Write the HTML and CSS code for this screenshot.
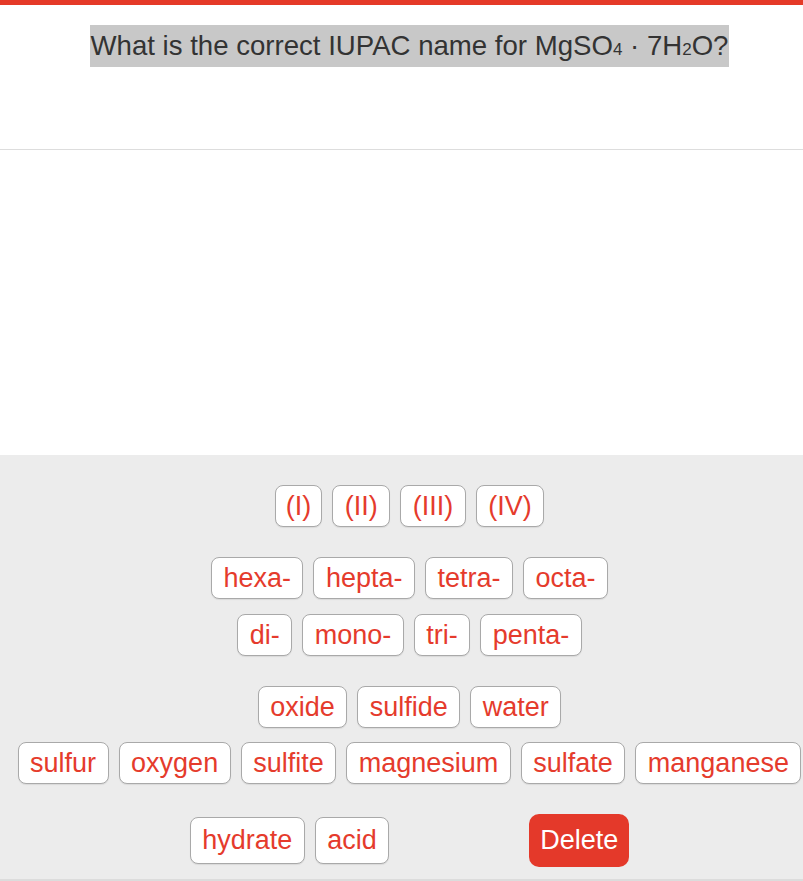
FILE: index.html
```html
<!DOCTYPE html>
<html lang="en">
<head>
<meta charset="utf-8">
<title>IUPAC name</title>
<link rel="stylesheet" href="styles.css">
</head>
<body>
<div class="topbar"></div>
<header class="question-area">
  <span class="question">What is the correct IUPAC name for MgSO<span class="sub">4</span> · 7H<span class="sub">2</span>O?</span>
</header>
<main class="answer-area"></main>
<section class="bank">
  <div class="group">
    <div class="row">
      <button class="tile tile-narrow">(I)</button>
      <button class="tile">(II)</button>
      <button class="tile">(III)</button>
      <button class="tile">(IV)</button>
    </div>
  </div>
  <div class="group">
    <div class="row">
      <button class="tile">hexa-</button>
      <button class="tile">hepta-</button>
      <button class="tile">tetra-</button>
      <button class="tile">octa-</button>
    </div>
    <div class="row">
      <button class="tile">di-</button>
      <button class="tile">mono-</button>
      <button class="tile">tri-</button>
      <button class="tile">penta-</button>
    </div>
  </div>
  <div class="group">
    <div class="row">
      <button class="tile">oxide</button>
      <button class="tile">sulfide</button>
      <button class="tile">water</button>
    </div>
    <div class="row row-tight">
      <button class="tile">sulfur</button>
      <button class="tile">oxygen</button>
      <button class="tile">sulfite</button>
      <button class="tile">magnesium</button>
      <button class="tile">sulfate</button>
      <button class="tile">manganese</button>
    </div>
  </div>
  <div class="group last">
    <div class="row actions">
      <div class="subrow">
        <button class="tile tall">hydrate</button>
        <button class="tile tall">acid</button>
      </div>
      <button class="delete">Delete</button>
    </div>
  </div>
</section>
</body>
</html>
```
FILE: styles.css
```css
html, body {
  margin: 0;
  padding: 0;
  background: #ffffff;
}

body {
  font-family: "Liberation Sans", Arial, sans-serif;
  width: 803px;
  height: 881px;
  overflow: hidden;
}

.topbar {
  height: 5px;
  background: #e53a28;
}

.question-area {
  box-sizing: border-box;
  height: 145px;
  padding: 20px 0 0 16px;
  text-align: center;
  border-bottom: 1px solid #dddddd;
}

.question {
  display: inline-block;
  vertical-align: top;
  height: 42px;
  background: #c8c8c8;
  color: #333333;
  font-size: 27.6px;
  line-height: 42px;
  padding: 0 1px;
  white-space: nowrap;
}

.question .sub {
  font-size: 17px;
  line-height: 0;
  vertical-align: baseline;
}

.answer-area {
  height: 305px;
}

.bank {
  box-sizing: border-box;
  height: 426px;
  background: #ececec;
  border-bottom: 2px solid #dcdcdc;
  padding: 30px 0 0 16px;
  display: flex;
  flex-direction: column;
  gap: 30px;
}

.group {
  display: flex;
  flex-direction: column;
  gap: 15px;
}

.row {
  display: flex;
  justify-content: center;
  align-items: center;
  gap: 10px;
}

.group .row-tight {
  margin-top: -1px;
}

.subrow {
  display: flex;
  gap: 10px;
}

.actions {
  gap: 140px;
}

.tile {
  box-sizing: border-box;
  height: 42px;
  margin: 0;
  padding: 0 11.5px;
  border: 1px solid #a9a9a9;
  border-radius: 8px;
  background: #ffffff;
  color: #e53b2c;
  font-family: "Liberation Sans", Arial, sans-serif;
  font-size: 27px;
  line-height: 40px;
  white-space: nowrap;
  box-shadow: 0 1px 1px rgba(0, 0, 0, 0.08);
}

.tile-narrow {
  padding: 0 10px;
}

.tile.tall {
  height: 47px;
  line-height: 45px;
}

.delete {
  box-sizing: border-box;
  width: 100px;
  height: 53px;
  margin: 0;
  padding: 0;
  border: none;
  border-radius: 10px;
  background: #e4392a;
  color: #ffffff;
  font-family: "Liberation Sans", Arial, sans-serif;
  font-size: 27px;
  line-height: 53px;
}
```
